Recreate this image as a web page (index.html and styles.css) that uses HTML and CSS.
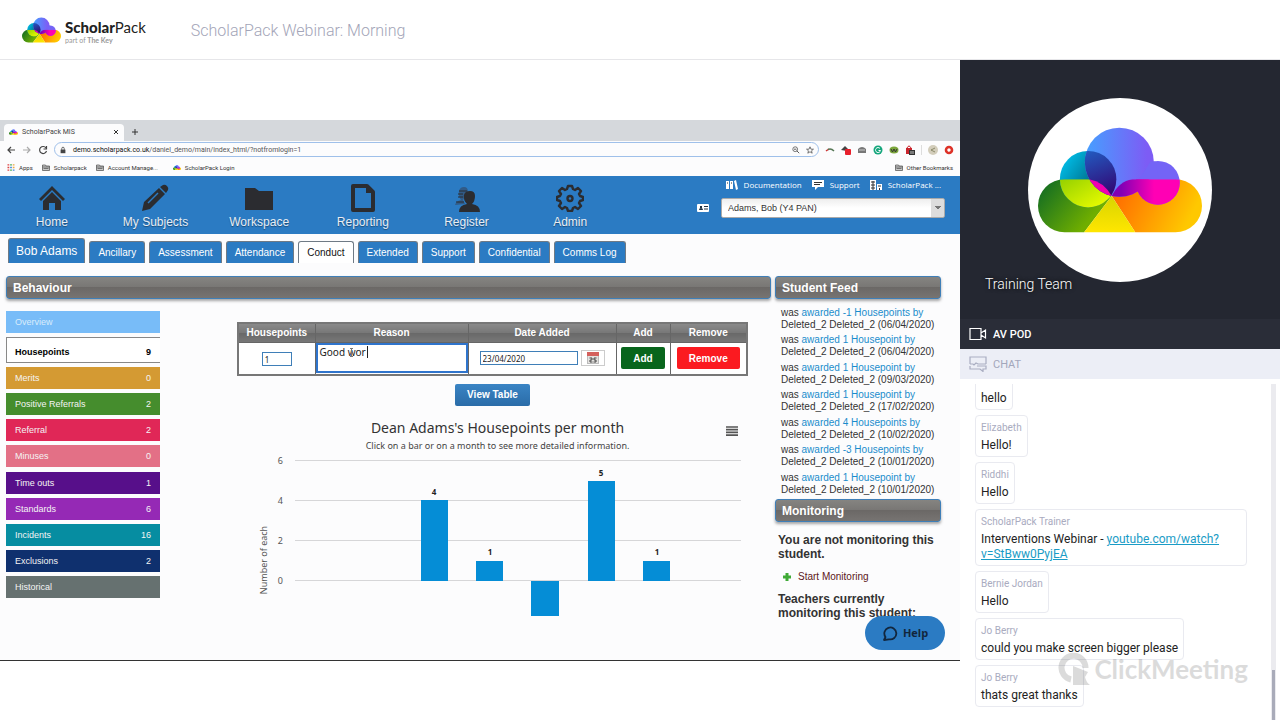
FILE: index.html
```html
<!DOCTYPE html>
<html lang="en">
<head>
  <meta charset="UTF-8">
  <meta name="viewport" content="width=device-width, initial-scale=1.0">
  <title>ScholarPack Webinar: Morning</title>
  <link rel="stylesheet" href="styles.css">
</head>
<body>
  <!-- Shared symbols -->
  <svg class="sprite" aria-hidden="true">
    <defs>
      <linearGradient id="g-green" x1="0" y1="0" x2="1" y2="0.6"><stop offset="0.05" stop-color="#0f6a24"/><stop offset="0.85" stop-color="#6fae00"/></linearGradient>
      <linearGradient id="g-orange" x1="0" y1="0" x2="1" y2="0.3"><stop offset="0.1" stop-color="#ff6a00"/><stop offset="1" stop-color="#ffc800"/></linearGradient>
      <linearGradient id="g-teal" x1="0" y1="0" x2="0.7" y2="0.5"><stop offset="0.1" stop-color="#00c4f0"/><stop offset="0.9" stop-color="#00708c"/></linearGradient>
      <linearGradient id="g-blue" x1="0" y1="0.4" x2="1" y2="0.4"><stop offset="0" stop-color="#45a0ff"/><stop offset="0.9" stop-color="#7d5cf5"/></linearGradient>
      <linearGradient id="g-navy" x1="0" y1="0" x2="0.4" y2="1"><stop offset="0.2" stop-color="#2068cc"/><stop offset="1" stop-color="#33006e"/></linearGradient>
      <linearGradient id="g-lime" x1="0" y1="0" x2="0.6" y2="1"><stop offset="0.3" stop-color="#8ccc00"/><stop offset="1" stop-color="#e2f800"/></linearGradient>
      <linearGradient id="g-pink" gradientUnits="userSpaceOnUse" x1="458" y1="0" x2="600" y2="0"><stop offset="0.2" stop-color="#8200b4"/><stop offset="0.9" stop-color="#ff00b4"/></linearGradient>
      <linearGradient id="g-yellow" x1="0" y1="0" x2="0" y2="1"><stop offset="0" stop-color="#d8d400"/><stop offset="1" stop-color="#ffe600"/></linearGradient>
      <clipPath id="c-teal"><circle cx="387" cy="359" r="85"/></clipPath>
      <clipPath id="c-big"><circle cx="481" cy="308" r="104"/></clipPath>
      <clipPath id="c-green"><path d="M316 359H390Q434 370 458 410L375 519H316A80 80 0 0 1 316 359Z"/></clipPath>
      <clipPath id="c-orange"><path d="M458 410Q480 365 520 359H650A80 80 0 0 1 650 519H529Z"/></clipPath>
    </defs>
    <symbol id="cloud" viewBox="236 203 494 317">
      <path d="M316 359H390Q434 370 458 410L375 519H316A80 80 0 0 1 316 359Z" fill="url(#g-green)"/>
      <path d="M458 410Q480 365 520 359H650A80 80 0 0 1 650 519H529Z" fill="url(#g-orange)"/>
      <path d="M458 410L375 519H529Z" fill="url(#g-yellow)"/>
      <circle cx="387" cy="359" r="85" fill="url(#g-teal)"/>
      <g clip-path="url(#c-green)"><circle cx="387" cy="359" r="85" fill="url(#g-lime)"/></g>
      <circle cx="597" cy="370" r="66" fill="#7464f6"/>
      <circle cx="481" cy="308" r="104" fill="url(#g-blue)"/>
      <path d="M575 306H590L600 360H540Z" fill="#7464f6"/>
      <g clip-path="url(#c-teal)"><circle cx="481" cy="308" r="104" fill="url(#g-navy)"/></g>
      <g clip-path="url(#c-big)"><path d="M390 359Q434 366 458 410L440 412L395 380Z" fill="#f000b0"/></g>
      <g clip-path="url(#c-orange)"><circle cx="597" cy="370" r="66" fill="url(#g-pink)"/><circle cx="481" cy="308" r="104" fill="url(#g-pink)"/></g>
    </symbol>
    <symbol id="folder" viewBox="0 0 16 14">
      <path d="M1 2H7L8 4H15V13H1ZM1 6H15M3 9H13" fill="#c8c8c8" stroke="#555" stroke-width="1.5"/>
    </symbol>
  </svg>

  <header class="header">
    <a href="#" class="logo">
      <svg class="logo-mark"><use href="#cloud"/></svg>
      <span class="logo-text">
        <span class="logo-name"><b>Scholar</b>Pack</span>
        <span class="logo-sub">part of <b>The Key</b></span>
      </span>
    </a>
    <h1 class="title">ScholarPack Webinar: Morning</h1>
  </header>

  <div class="room">
    <main class="stage">
      <div class="screen">
        <!-- Browser chrome -->
        <div class="tabstrip">
          <div class="browser-tab">
            <svg class="favicon"><use href="#cloud"/></svg>
            <span>ScholarPack MIS</span>
            <svg class="tab-close" viewBox="0 0 6 6"><path d="M1 1L5 5M5 1L1 5" stroke="#333" stroke-width="1"/></svg>
          </div>
          <svg class="tab-new" viewBox="0 0 6 6"><path d="M3 0V6M0 3H6" stroke="#333" stroke-width="1"/></svg>
        </div>
        <div class="toolbar">
          <svg viewBox="0 0 10 10"><path d="M9 5H2M5 2L2 5L5 8" fill="none" stroke="#444" stroke-width="1.2"/></svg>
          <svg viewBox="0 0 10 10"><path d="M1 5H8M5 2L8 5L5 8" fill="none" stroke="#aaa" stroke-width="1.2"/></svg>
          <svg viewBox="0 0 10 10"><path d="M8 3A3.500 3.500 0 1 0 8.500 6M8.500 1V4H5.500" fill="none" stroke="#444" stroke-width="1.2"/></svg>
          <div class="urlbar">
            <svg viewBox="0 0 10 10"><path d="M2 4.500H8V9H2Z" fill="#444"/><path d="M3.500 5V3A1.500 1.500 0 0 1 6.500 3V5" fill="none" stroke="#444"/></svg>
            <span class="url"><b>demo.scholarpack.co.uk</b>/daniel_demo/main/index_html/?notfromlogin=1</span>
            <svg viewBox="0 0 10 10"><circle cx="4" cy="4" r="3" fill="none" stroke="#555"/><path d="M6 6L9 9M2.500 4H5.500" stroke="#555" stroke-width="1.2"/></svg>
            <svg viewBox="0 0 10 10"><path d="M5 1L6.200 4H9.300L6.900 6L7.700 9L5 7.200L2.300 9L3.100 6L.7 4H3.800Z" fill="none" stroke="#555"/></svg>
          </div>
          <div class="extensions">
            <svg viewBox="0 0 10 10"><path d="M1 6L4 4" stroke="#c33" stroke-width="1.500"/><path d="M3 4.500Q6 3 9 6" fill="none" stroke="#575" stroke-width="1.500"/></svg>
            <svg viewBox="0 0 10 10"><path d="M0 5L4 1L8 5L6 6Z" fill="#444"/><rect x="4" y="4" width="6" height="6" rx="1" fill="#e8202c"/></svg>
            <svg viewBox="0 0 10 10"><path d="M1 4Q5 0 9 4V8H1Z" fill="#777"/><path d="M2 5H8" stroke="#ccc"/></svg>
            <svg viewBox="0 0 10 10"><circle cx="5" cy="5" r="4.500" fill="#15a67c"/><path d="M7 3.500A2.500 2.500 0 1 0 7.500 5.500H5.500" fill="none" stroke="#fff"/></svg>
            <svg viewBox="0 0 10 10"><ellipse cx="5" cy="5" rx="4.500" ry="3.500" fill="#7ba63b"/><path d="M2 4L3.500 7L5 4L6.500 7L8 4" fill="none" stroke="#333"/></svg>
            <svg viewBox="0 0 10 10"><path d="M1 3H7V9H1Z" fill="#c9242c"/><path d="M2 3Q4 -1 6 3" fill="none" stroke="#c9242c"/><rect x="4" y="5" width="6" height="5" fill="#333"/><path d="M6 6V9M8 6V9" stroke="#fff" stroke-width=".7"/></svg>
            <i></i>
            <svg viewBox="0 0 10 10"><circle cx="5" cy="5" r="5" fill="#d3cdbb"/><path d="M7 3L3 5L7 7" fill="none" stroke="#775" stroke-width=".8"/></svg>
            <svg viewBox="0 0 10 10"><circle cx="5" cy="5" r="3" fill="#fff" stroke="#dd3127" stroke-width="2.600"/></svg>
          </div>
        </div>
        <nav class="bookmarks">
          <a href="#"><svg viewBox="0 0 8 8"><path d="M0 1H2M0 4H2M0 7H2" stroke="#d44" stroke-width="1.500"/><path d="M3 1H5M3 7H5" stroke="#4a5" stroke-width="1.500"/><path d="M3 4H5M6 7H8" stroke="#48d" stroke-width="1.500"/><path d="M6 1H8M6 4H8" stroke="#ea4" stroke-width="1.500"/></svg>Apps</a>
          <a href="#"><svg><use href="#folder"/></svg>Scholarpack</a>
          <a href="#"><svg><use href="#folder"/></svg>Account Manage...</a>
          <a href="#" class="bookmark-login"><svg><use href="#cloud"/></svg>ScholarPack Login</a>
          <a href="#" class="bookmark-other"><svg><use href="#folder"/></svg>Other Bookmarks</a>
        </nav>

        <!-- Application -->
        <div class="topnav">
          <nav class="modules">
            <a href="#"><svg viewBox="0 0 28 28"><path d="M14 2L27 15L25 17L14 6L3 17L1 15Z"/><path d="M14 8L23 17V26H17V19H11V26H5V17Z"/></svg>Home</a>
            <a href="#"><svg viewBox="0 0 28 28"><path d="M1 27L3 18L18 4L24 10L9 25ZM19 3L22 1Q24 0 26 2Q28 4 27 6L25 9Z"/><path d="M7 19L17 9" stroke="#2b7bc3" stroke-width="1.500"/></svg>My Subjects</a>
            <a href="#"><svg viewBox="0 0 28 28"><path d="M0 4H10L14 7H28V26H0Z"/></svg>Workspace</a>
            <a href="#"><svg viewBox="0 0 28 28"><path d="M4 2H18L24 8V26H4Z" fill="none" stroke="#2b2c30" stroke-width="4" stroke-linejoin="round"/><path d="M17 2V9H24Z"/></svg>Reporting</a>
            <a href="#"><svg viewBox="0 0 28 28"><path d="M3 21Q4 17 9 16Q6 12 7 7Q8 3 12 3Q16 3 16 8L11 16L13 20Z" fill="#315b87"/><path d="M7 28Q7 21 15 20Q11 16 12 11Q13 7 18 7Q23 7 23 12Q23 17 20 20Q28 21 28 28Z"/><path d="M7 7H15M6 10H11M6 13H11M4 18H12" stroke="#2b2c30"/></svg>Register</a>
            <a href="#"><svg viewBox="0 0 28 28"><g fill="none" stroke="#2b2c30" stroke-width="2.400" stroke-linejoin="round"><path d="M12 2H16L17 5L19 6L22 4L25 7L23 10L24 12L27 13V16L24 17L23 19L25 22L22 25L19 23L17 24L16 27H12L11 24L9 23L6 25L3 22L5 19L4 17L1 16V13L4 12L5 10L3 7L6 4L9 6L11 5Z"/><circle cx="14" cy="14.500" r="2.500"/></g></svg>Admin</a>
          </nav>
          <div class="tools">
            <div class="tool-links">
              <a href="#"><svg viewBox="0 0 12 10"><path d="M0 1H3V9H0ZM4 1H7V9H4ZM8 1L10 0L12 9L10 10Z" fill="#fff"/><path d="M1 3H2M5 3H6" stroke="#333"/></svg>Documentation</a>
              <a href="#"><svg viewBox="0 0 12 10"><path d="M0 0H12V7H6L3 10V7H0Z" fill="#fff"/><path d="M2 2.500H10M2 4.500H8" stroke="#333"/></svg>Support</a>
              <a href="#"><svg viewBox="0 0 12 10"><path d="M0 0H6V10H0ZM7 4H12V10H7Z" fill="#fff"/><path d="M1 2H5M1 5H5M1 8H5M3 1V10M8 6H11M9.500 8V10" stroke="#333"/></svg>ScholarPack ...</a>
            </div>
            <div class="student-picker">
              <svg viewBox="0 0 12 8"><rect width="12" height="8" rx="1" fill="#fff"/><path d="M2 6Q2 4 4 4Q6 4 6 6ZM3 2H5V4H3Z" fill="#234"/><path d="M7 2.500H11M7 5H11" stroke="#234"/></svg>
              <select aria-label="Student">
                <option>Adams, Bob (Y4 PAN)</option>
              </select>
            </div>
          </div>
        </div>

        <nav class="tabs">
          <a href="#" class="tab tab-student">Bob Adams</a>
          <a href="#" class="tab">Ancillary</a>
          <a href="#" class="tab">Assessment</a>
          <a href="#" class="tab">Attendance</a>
          <a href="#" class="tab active">Conduct</a>
          <a href="#" class="tab">Extended</a>
          <a href="#" class="tab">Support</a>
          <a href="#" class="tab">Confidential</a>
          <a href="#" class="tab">Comms Log</a>
        </nav>

        <div class="page">
          <section class="behaviour">
            <h2 class="bar">Behaviour</h2>
            <div class="behaviour-body">
              <nav class="menu">
                <a href="#" class="overview">Overview</a>
                <a href="#" class="housepoints">Housepoints<span>9</span></a>
                <a href="#" class="merits">Merits<span>0</span></a>
                <a href="#" class="positive">Positive Referrals<span>2</span></a>
                <a href="#" class="referral">Referral<span>2</span></a>
                <a href="#" class="minuses">Minuses<span>0</span></a>
                <a href="#" class="timeouts">Time outs<span>1</span></a>
                <a href="#" class="standards">Standards<span>6</span></a>
                <a href="#" class="incidents">Incidents<span>16</span></a>
                <a href="#" class="exclusions">Exclusions<span>2</span></a>
                <a href="#" class="historical">Historical</a>
              </nav>

              <div class="entry">
                <table class="entry-table">
                  <thead>
                    <tr>
                      <th class="col-points">Housepoints</th>
                      <th class="col-reason">Reason</th>
                      <th class="col-date">Date Added</th>
                      <th class="col-add">Add</th>
                      <th class="col-remove">Remove</th>
                    </tr>
                  </thead>
                  <tbody>
                    <tr>
                      <td><input type="text" class="points" value="1" aria-label="Housepoints"></td>
                      <td class="reason-cell">
                        <textarea aria-label="Reason">Good wor</textarea>
                        <span class="caret"></span>
                        <svg class="ibeam" viewBox="0 0 5 9"><path d="M1 .5H4M2.500 .5V8.500M1 8.500H4" stroke="#777" fill="none"/></svg>
                      </td>
                      <td>
                        <div class="date-field">
                          <input type="text" value="23/04/2020" aria-label="Date Added">
                          <button type="button" aria-label="Pick date"><svg viewBox="0 0 12 12"><rect x=".5" y=".5" width="11" height="11" fill="#e4e2e0" stroke="#bbb"/><rect width="12" height="4" fill="#d4605c"/><path d="M2.500 6H5V8H3V10H5.500M9.500 6H7V8H9V10H6.500" fill="none" stroke="#444"/></svg></button>
                        </div>
                      </td>
                      <td><button type="button" class="btn btn-add">Add</button></td>
                      <td><button type="button" class="btn btn-remove">Remove</button></td>
                    </tr>
                  </tbody>
                </table>
                <button type="button" class="btn btn-view">View Table</button>

                <div class="chart">
                  <div class="chart-head">
                    <h3>Dean Adams's Housepoints per month</h3>
                    <p>Click on a bar or on a month to see more detailed information.</p>
                    <button type="button" class="chart-menu" aria-label="Chart menu"><svg viewBox="0 0 12 10"><path d="M0 1H12M0 3.700H12M0 6.400H12M0 9.100H12" stroke="#555" stroke-width="1.700"/></svg></button>
                  </div>
                  <svg class="plot" viewBox="0 0 511 170">
                    <path class="grid" d="M58 6.500H504M58 46.500H504M58 86.500H504M58 126.500H504"/>
                    <g class="axis">
                      <text x="46" y="10">6</text>
                      <text x="46" y="50">4</text>
                      <text x="46" y="90">2</text>
                      <text x="46" y="130">0</text>
                      <text class="axis-title" transform="translate(30 106) rotate(-90)">Number of each</text>
                    </g>
                    <g class="bars">
                      <rect x="184" y="46" width="27" height="81"/>
                      <rect x="239" y="107" width="27" height="20"/>
                      <rect x="294" y="127" width="28" height="35"/>
                      <rect x="351" y="27" width="27" height="100"/>
                      <rect x="406" y="107" width="27" height="20"/>
                    </g>
                    <g class="values">
                      <text x="197" y="41">4</text>
                      <text x="253" y="101">1</text>
                      <text x="364" y="22">5</text>
                      <text x="420" y="101">1</text>
                    </g>
                  </svg>
                </div>
              </div>
            </div>
          </section>

          <aside class="feed">
            <h2 class="bar">Student Feed</h2>
            <ul class="feed-list">
              <li>was <a href="#">awarded -1 Housepoints by</a><br>Deleted_2 Deleted_2 (06/04/2020)</li>
              <li>was <a href="#">awarded 1 Housepoint by</a><br>Deleted_2 Deleted_2 (06/04/2020)</li>
              <li>was <a href="#">awarded 1 Housepoint by</a><br>Deleted_2 Deleted_2 (09/03/2020)</li>
              <li>was <a href="#">awarded 1 Housepoint by</a><br>Deleted_2 Deleted_2 (17/02/2020)</li>
              <li>was <a href="#">awarded 4 Housepoints by</a><br>Deleted_2 Deleted_2 (10/02/2020)</li>
              <li>was <a href="#">awarded -3 Housepoints by</a><br>Deleted_2 Deleted_2 (10/01/2020)</li>
              <li>was <a href="#">awarded 1 Housepoint by</a><br>Deleted_2 Deleted_2 (10/01/2020)</li>
            </ul>
            <h2 class="bar">Monitoring</h2>
            <div class="monitoring">
              <h3>You are not monitoring this student.</h3>
              <a href="#" class="start"><svg viewBox="0 0 8 8"><path d="M2.500 0H5.500V2.500H8V5.500H5.500V8H2.500V5.500H0V2.500H2.500Z" fill="#3faa36"/></svg>Start Monitoring</a>
              <h3>Teachers currently monitoring this student:</h3>
            </div>
          </aside>
        </div>

        <button type="button" class="help"><svg viewBox="0 0 16 16"><path d="M2 15L3.500 12A6 6 0 1 1 7 14.300Z" fill="none" stroke="#12263d" stroke-width="1.800" stroke-linejoin="round"/></svg>Help</button>
      </div>
    </main>

    <aside class="sidebar">
      <div class="video">
        <div class="avatar"><svg><use href="#cloud"/></svg></div>
        <span class="presenter">Training Team</span>
      </div>
      <div class="pod-title av">
        <svg viewBox="0 0 18 14"><path d="M1 1.500H12V12.500H1ZM12 6L16.500 3V11L12 8" fill="none" stroke="#fff" stroke-width="1.200"/></svg>
        AV POD
      </div>
      <div class="pod-title chat-title">
        <svg viewBox="0 0 18 16"><path d="M1 8V1H17V8M1 8H4L5 9L7 7L9 8H17M1 10V13H11L14 15.500V13H17V10H8" fill="none" stroke="#a9adc1" stroke-width="1.200"/></svg>
        CHAT
      </div>
      <div class="chat">
        <div class="messages">
          <div class="message"><div class="author"></div><p>hello</p></div>
          <div class="message"><div class="author">Elizabeth</div><p>Hello!</p></div>
          <div class="message"><div class="author">Riddhi</div><p>Hello</p></div>
          <div class="message"><div class="author">ScholarPack Trainer</div><p>Interventions Webinar - <a href="#">youtube.com/watch?<wbr>v=StBww0PyjEA</a></p></div>
          <div class="message"><div class="author">Bernie Jordan</div><p>Hello</p></div>
          <div class="message"><div class="author">Jo Berry</div><p>could you make screen bigger please</p></div>
          <div class="message"><div class="author">Jo Berry</div><p>thats great thanks</p></div>
        </div>
        <div class="scrollbar"><div class="thumb"></div></div>
        <div class="watermark">
          <svg viewBox="0 0 32 34"><path d="M13 27.500A12 12 0 1 1 27.500 16" fill="none" stroke="currentColor" stroke-width="6"/><path d="M15 14L30 20L27 25Q28 30 32 33H15Z" fill="currentColor"/></svg>
          ClickMeeting
        </div>
      </div>
    </aside>
  </div>
</body>
</html>
```

FILE: styles.css
```css
* {
  box-sizing: border-box;
}

body {
  margin: 0;
  height: 100vh;
  display: flex;
  flex-direction: column;
  overflow: hidden;
  background: #fff;
  color: #222;
  font-family: Roboto, sans-serif;
}

h1, h2, h3, p, ul {
  margin: 0;
  padding: 0;
}

a {
  color: inherit;
  text-decoration: none;
}

button {
  font-family: inherit;
  cursor: pointer;
}

.sprite {
  position: absolute;
  width: 0;
  height: 0;
}

/* Header */
.header {
  height: 60px;
  flex: none;
  display: flex;
  align-items: center;
  gap: 45px;
  padding: 1px 22px 0;
  border-bottom: 1px solid #e6e6e9;
}

.logo {
  display: flex;
  gap: 4px;
}

.logo-mark {
  width: 39px;
  height: 26px;
}

.logo-text {
  display: flex;
  flex-direction: column;
  font-family: Lato, sans-serif;
}

.logo-name {
  font-size: 15px;
  line-height: 20px;
  color: #222;
}

.logo-name b {
  font-weight: 900;
}

.logo-sub {
  font-size: 7px;
  line-height: 6px;
  color: #999;
}

.title {
  font-size: 16px;
  font-weight: 300;
  color: #a3a5b8;
}

/* Room */
.room {
  flex: 1;
  min-height: 0;
  display: flex;
}

.stage {
  flex: 3;
  min-width: 0;
  display: flex;
  align-items: center;
}

.screen {
  position: relative;
  width: 100%;
  background: #fcfcfd;
  border-bottom: 1px solid #333;
  font-family: "Liberation Sans", Arial, sans-serif;
}

/* Browser chrome */
.tabstrip {
  height: 21px;
  display: flex;
  align-items: center;
  gap: 8px;
  padding: 4px 4px 0;
  background: #d5d8dc;
}

.browser-tab {
  width: 120px;
  height: 17px;
  display: flex;
  align-items: center;
  gap: 4px;
  padding: 0 5px;
  background: #fcfcfd;
  border-radius: 4px 4px 0 0;
  font: 7px Roboto, sans-serif;
  color: #444;
}

.favicon {
  width: 9px;
  height: 6px;
}

.tab-close,
.tab-new {
  width: 6px;
  height: 6px;
}

.tab-close {
  margin-left: auto;
}

.toolbar {
  height: 18px;
  display: flex;
  align-items: center;
  gap: 6px;
  padding: 0 6px;
}

.toolbar svg {
  width: 10px;
  height: 10px;
  flex: none;
}

.urlbar {
  flex: 1;
  height: 15px;
  display: flex;
  align-items: center;
  gap: 6px;
  padding: 0 4px;
  border: 1px solid #9fc0ea;
  border-radius: 8px;
  font: 7px Roboto, sans-serif;
  color: #555;
}

.urlbar svg {
  width: 8px;
  height: 8px;
}

.url {
  flex: 1;
}

.url b {
  font-weight: 400;
  color: #111;
}

.extensions {
  display: flex;
  align-items: center;
  gap: 6px;
}

.extensions i {
  width: 1px;
  height: 10px;
  background: #ddd;
}

.bookmarks {
  height: 17px;
  display: flex;
  align-items: center;
  gap: 9px;
  padding: 0 7px;
  font: 6px Roboto, sans-serif;
  color: #333;
}

.bookmarks a {
  display: flex;
  align-items: center;
  gap: 4px;
}

.bookmarks svg {
  width: 8px;
  height: 7px;
}

.bookmark-login {
  margin-left: 6px;
}

.bookmark-other {
  margin-left: auto;
}

/* Top navigation */
.topnav {
  height: 58px;
  display: flex;
  justify-content: space-between;
  background: #2b7bc3;
  color: #e8eef5;
}

.modules {
  width: 65%;
  display: grid;
  grid-template-columns: repeat(6, 1fr);
  padding-right: 2px;
}

.modules a {
  display: flex;
  flex-direction: column;
  align-items: center;
  gap: 3px;
  padding-top: 8px;
  font-size: 12px;
  line-height: 15px;
  text-shadow: 0 1px 1px rgba(0, 0, 0, 0.4);
}

.modules svg {
  width: 28px;
  height: 28px;
  fill: #2b2c30;
}

.tools {
  padding: 2px 15px 0 0;
  display: flex;
  flex-direction: column;
  gap: 6px;
}

.tool-links {
  display: flex;
  justify-content: flex-end;
  gap: 10px;
  padding-right: 4px;
  font: 8px/14px "Open Sans", sans-serif;
  color: #fff;
}

.tool-links a {
  display: flex;
  align-items: center;
  gap: 6px;
}

.tool-links svg {
  width: 12px;
  height: 10px;
}

.student-picker {
  display: flex;
  align-items: center;
  gap: 12px;
}

.student-picker svg {
  width: 12px;
  height: 8px;
}

.student-picker select {
  width: 224px;
  height: 20px;
  padding: 0 6px;
  appearance: none;
  border: 1px solid #aaa;
  border-radius: 2px;
  background:
    linear-gradient(to top left, transparent 50%, #777 50%) right 3px center / 3px 4px no-repeat,
    linear-gradient(to top right, transparent 50%, #777 50%) right 6px center / 3px 4px no-repeat,
    linear-gradient(#ddd, #ddd) right / 13px 100% no-repeat,
    linear-gradient(#eee, #fff 50%);
  font: 9px "Liberation Sans", Arial, sans-serif;
  color: #333;
}

/* Tabs */
.tabs {
  height: 30px;
  display: flex;
  align-items: flex-end;
  gap: 4px;
  padding: 0 8px 1px;
}

.tab {
  height: 22px;
  padding: 0 8px;
  background: #2b7bc3;
  border: 1px solid #6f7a85;
  border-bottom: 0;
  border-radius: 3px 3px 0 0;
  color: #fff;
  font-size: 10px;
  line-height: 22px;
}

.tab-student {
  height: 25px;
  padding: 0 7px;
  font-size: 12px;
  line-height: 24px;
}

.tab.active {
  background: #fff;
  color: #111;
}

/* Page */
.page {
  display: flex;
  gap: 4px;
  height: 396px;
  padding: 12px 19px 0 6px;
}

.behaviour {
  flex: 1;
}

.bar {
  height: 23px;
  padding: 0 6px;
  border: 1px solid #3f7fb8;
  border-radius: 3px;
  background: linear-gradient(#858481, #787674 50%, #6b6866 50%, #777472);
  box-shadow: 0 2px 3px rgba(0, 0, 0, 0.35);
  color: #fff;
  font-size: 12px;
  line-height: 23px;
}

.behaviour-body {
  display: flex;
  padding-top: 12px;
}

.menu {
  width: 154px;
  height: 288px;
  flex: none;
  display: flex;
  flex-direction: column;
  justify-content: space-between;
  font-size: 9px;
  line-height: 22px;
  color: #f4f4f4;
}

.menu a {
  height: 22px;
  display: flex;
  justify-content: space-between;
  padding: 0 9px;
}

.menu .overview { background: #78bcf8; color: #d9ecfb; }
.menu .merits { background: #d49a33; }
.menu .positive { background: #458d2d; }
.menu .referral { background: #e02757; }
.menu .minuses { background: #e37086; }
.menu .timeouts { background: #570f8a; }
.menu .standards { background: #9529b5; }
.menu .incidents { background: #068da1; }
.menu .exclusions { background: #0f306e; }
.menu .historical { background: #667170; }

.menu .housepoints {
  height: 26px;
  padding: 0 9px 0 8px;
  background: #fff;
  border: 1px solid #888;
  border-right: 0;
  color: #000;
  font-weight: 700;
  line-height: 28px;
}

/* Entry form */
.entry {
  flex: 1;
  display: flex;
  flex-direction: column;
  align-items: center;
  padding: 11px 0 0 54px;
}

.entry-table {
  width: 100%;
  max-width: 511px;
  table-layout: fixed;
  border-collapse: collapse;
  border: 2px solid #777;
}

.entry-table th {
  height: 20px;
  padding: 0;
  border: 1px solid #666;
  background: linear-gradient(#8a8a8a, #777 50%, #686868 50%, #777);
  color: #fff;
  font-size: 10px;
}

.entry-table td {
  height: 32px;
  padding: 0;
  border: 1px solid #666;
  background: #fff;
  text-align: center;
}

.col-points { width: 77px; }
.col-date { width: 148px; }
.col-add { width: 54px; }
.col-remove { width: 77px; }

.entry-table input {
  height: 14px;
  padding: 0 2px;
  border: 1px solid #3f7fb8;
  background: #fff;
  font: 8px "Noto Sans", sans-serif;
  color: #222;
}

.entry-table .points {
  width: 30px;
  vertical-align: middle;
}

.reason-cell {
  position: relative;
}

.reason-cell textarea {
  display: block;
  width: 100%;
  height: 30px;
  padding: 0 2px;
  border: 2px solid #2f74cc;
  outline: 0;
  resize: none;
  overflow: hidden;
  background: #fff;
  font: 10px/14px "Noto Sans", sans-serif;
  color: #222;
}

.caret {
  position: absolute;
  left: 51px;
  top: 3px;
  width: 1px;
  height: 12px;
  background: #222;
}

.ibeam {
  position: absolute;
  left: 33px;
  top: 5px;
  width: 5px;
  height: 9px;
}

.date-field {
  display: flex;
  align-items: center;
  justify-content: center;
  gap: 3px;
}

.date-field input {
  width: 98px;
}

.date-field button {
  width: 24px;
  height: 16px;
  padding: 0;
  border: 1px solid #ccc;
  background: #fff;
}

.date-field svg {
  display: block;
  width: 12px;
  height: 12px;
  margin: 0 auto;
}

.btn {
  height: 22px;
  padding: 0 12px;
  border: 0;
  border-radius: 2px;
  color: #fff;
  font-size: 10px;
  font-weight: 700;
}

.btn-add {
  background: #08651c;
}

.btn-remove {
  background: #fb1a20;
}

.btn-view {
  margin-top: 8px;
  background: linear-gradient(#3a84c4, #2a6ca8);
}

/* Chart */
.chart {
  width: 100%;
  max-width: 511px;
  margin-top: 12px;
  font-family: "Noto Sans", sans-serif;
}

.chart-head {
  position: relative;
  padding-left: 10px;
  text-align: center;
}

.chart-head h3 {
  font-size: 14px;
  font-weight: 400;
  line-height: 20px;
  color: #333;
}

.chart-head p {
  font-size: 9px;
  line-height: 16px;
  color: #444;
}

.chart-menu {
  position: absolute;
  top: 8px;
  right: 10px;
  padding: 0;
  border: 0;
  background: none;
}

.chart-menu svg {
  display: block;
  width: 12px;
  height: 10px;
}

.plot {
  display: block;
  width: 100%;
}

.grid {
  stroke: #d6d6d8;
  fill: none;
}

.axis text {
  font-size: 9px;
  fill: #555;
  text-anchor: end;
}

.axis .axis-title {
  font-size: 9px;
  text-anchor: middle;
}

.bars {
  fill: #058dd6;
}

.values text {
  font-size: 8px;
  font-weight: 700;
  fill: #222;
  text-anchor: middle;
}

/* Student feed */
.feed {
  width: 166px;
  flex: none;
}

.feed-list {
  height: 200px;
  display: flex;
  flex-direction: column;
  justify-content: space-between;
  padding: 8px 0 3px 6px;
  list-style: none;
  font-size: 10px;
  line-height: 12px;
  color: #333;
  white-space: nowrap;
}

.feed-list a {
  color: #1a8ccc;
}

.monitoring {
  padding: 11px 0 0 3px;
}

.monitoring h3 {
  font-size: 12px;
  line-height: 14px;
  color: #333;
}

.start {
  display: flex;
  align-items: center;
  gap: 7px;
  margin: 8px 0 7px 5px;
  font-size: 10px;
  line-height: 16px;
  color: #5c1720;
}

.start svg {
  width: 8px;
  height: 8px;
}

.help {
  position: absolute;
  right: 15px;
  bottom: 10px;
  width: 80px;
  height: 34px;
  display: flex;
  align-items: center;
  justify-content: center;
  gap: 5px;
  padding: 0;
  border: 0;
  border-radius: 17px;
  background: #2b7bc3;
  color: #12263d;
  font: 700 11px "Open Sans", sans-serif;
}

.help svg {
  width: 16px;
  height: 16px;
}

/* Sidebar */
.sidebar {
  flex: 1;
  min-width: 0;
  display: flex;
  flex-direction: column;
}

.video {
  position: relative;
  height: 259px;
  flex: none;
  display: flex;
  align-items: center;
  justify-content: center;
  background: #242731;
}

.avatar {
  width: 184px;
  height: 184px;
  display: flex;
  align-items: center;
  justify-content: center;
  padding-bottom: 19px;
  border-radius: 50%;
  background: #fff;
}

.avatar svg {
  width: 164px;
  height: 106px;
}

.presenter {
  position: absolute;
  left: 25px;
  bottom: 25px;
  color: #fff;
  font-size: 14px;
  font-weight: 300;
  line-height: 20px;
  text-shadow: 0 0 4px #000;
}

.pod-title {
  height: 30px;
  flex: none;
  display: flex;
  align-items: center;
  gap: 6px;
  padding: 0 9px;
  font-size: 11px;
}

.pod-title svg {
  width: 18px;
  height: 16px;
}

.av {
  background: #2a2d38;
  color: #fff;
  font-weight: 500;
}

.chat-title {
  background: #eceef6;
  color: #a3a7bb;
}

.chat {
  position: relative;
  flex: 1;
  min-height: 0;
  padding-top: 5px;
}

.messages {
  height: 100%;
  display: flex;
  flex-direction: column;
  justify-content: flex-end;
  align-items: flex-start;
  gap: 5px;
  padding: 0 33px 13px 15px;
  overflow: hidden;
}

.message {
  flex: none;
  padding: 5px 5px 3px;
  border: 1px solid #e9eaf0;
  border-radius: 4px;
}

.author {
  height: 14px;
  margin-bottom: 3px;
  font-size: 10px;
  line-height: 14px;
  color: #a9abc0;
}

.message p {
  font-size: 12px;
  line-height: 15px;
}

.message a {
  color: #1a9cc6;
  text-decoration: underline;
}

.scrollbar {
  position: absolute;
  top: 5px;
  right: 4px;
  bottom: 0;
  width: 5px;
  background: #ebebef;
}

.thumb {
  position: absolute;
  right: 1px;
  bottom: 0;
  width: 3px;
  height: 50px;
  background: #a9abb9;
}

.watermark {
  position: absolute;
  right: 32px;
  bottom: 34px;
  display: flex;
  align-items: center;
  gap: 4px;
  color: #3c3c3c;
  opacity: 0.18;
  font: 700 26px/34px Lato, sans-serif;
}

.watermark svg {
  width: 32px;
  height: 34px;
}
```
